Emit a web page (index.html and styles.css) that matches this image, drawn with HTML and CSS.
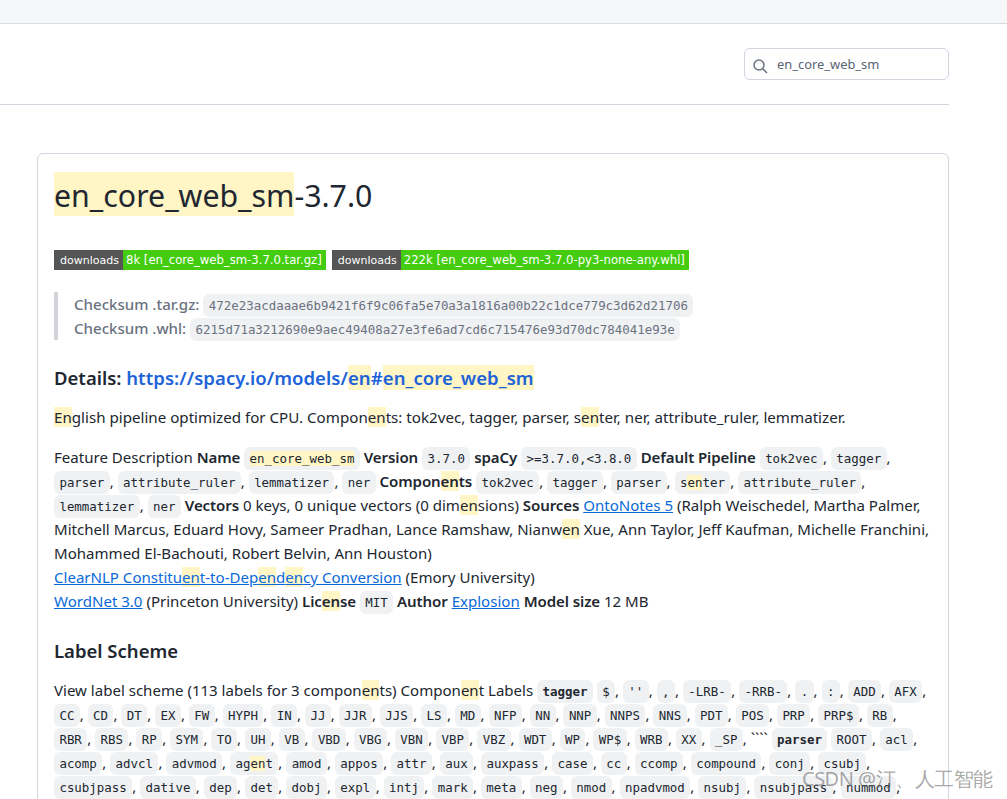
FILE: index.html
```html
<!DOCTYPE html>
<html lang="en">
<head>
<meta charset="utf-8">
<title>en_core_web_sm</title>
<link rel="stylesheet" href="styles.css">
</head>
<body>
<div class="topbar"></div>
<header class="header">
  <div class="search">
    <svg class="search-icon" width="16" height="16" viewBox="0 0 16 16" fill="none" stroke="#6b7280" stroke-width="1.5"><circle cx="7" cy="7" r="5"/><path d="M10.6 10.6 15 15"/></svg>
    <span class="search-text">en_core_web_sm</span>
  </div>
</header>
<main class="card">
  <h1><mark>en_core_web_sm</mark>-3.7.0</h1>
  <div class="badges">
    <span class="badge"><span class="badge-l">downloads</span><span class="badge-r">8k [en_core_web_sm-3.7.0.tar.gz]</span></span>
    <span class="badge"><span class="badge-l">downloads</span><span class="badge-r">222k [en_core_web_sm-3.7.0-py3-none-any.whl]</span></span>
  </div>
  <blockquote>
    Checksum .tar.gz: <code>472e23acdaaae6b9421f6f9c06fa5e70a3a1816a00b22c1dce779c3d62d21706</code><br>
    Checksum .whl: <code>6215d71a3212690e9aec49408a27e3fe6ad7cd6c715476e93d70dc784041e93e</code>
  </blockquote>
  <h3>Details: <a class="plain" href="#">https://spacy.io/models/<mark>en</mark>#<mark>en_core_web_sm</mark></a></h3>
  <p class="intro"><mark>En</mark>glish pipeline optimized for CPU. Compon<mark>en</mark>ts: tok2vec, tagger, parser, s<mark>en</mark>ter, ner, attribute_ruler, lemmatizer.</p>
  <p>Feature Description <strong>Name</strong> <code><mark>en_core_web_sm</mark></code> <strong>Version</strong> <code>3.7.0</code> <strong>spaCy</strong> <code>&gt;=3.7.0,&lt;3.8.0</code> <strong>Default Pipeline</strong> <code>tok2vec</code>, <code>tagger</code>,<br>
  <code>parser</code>, <code>attribute_ruler</code>, <code>lemmatizer</code>, <code>ner</code> <strong>Compon<mark>en</mark>ts</strong> <code>tok2vec</code>, <code>tagger</code>, <code>parser</code>, <code>s<mark>en</mark>ter</code>, <code>attribute_ruler</code>,<br>
  <code>lemmatizer</code>, <code>ner</code> <strong>Vectors</strong> 0 keys, 0 unique vectors (0 dim<mark>en</mark>sions) <strong>Sources</strong> <a href="#">OntoNotes 5</a> (Ralph Weischedel, Martha Palmer,<br>
  Mitchell Marcus, Eduard Hovy, Sameer Pradhan, Lance Ramshaw, Nianw<mark>en</mark> Xue, Ann Taylor, Jeff Kaufman, Michelle Franchini,<br>
  Mohammed El-Bachouti, Robert Belvin, Ann Houston)<br>
  <a href="#">ClearNLP Constitu<mark>en</mark>t-to-Dep<mark>en</mark>d<mark>en</mark>cy Conversion</a> (Emory University)<br>
  <a href="#">WordNet 3.0</a> (Princeton University) <strong>Lic<mark>en</mark>se</strong> <code>MIT</code> <strong>Author</strong> <a href="#">Explosion</a> <strong>Model size</strong> 12 MB</p>
  <h3 class="label-title">Label Scheme</h3>
  <p>View label scheme (113 labels for 3 compon<mark>en</mark>ts) Compon<mark>en</mark>t Labels <code class="bold">tagger</code> <code>$</code>, <code>''</code>, <code>,</code>, <code>-LRB-</code>, <code>-RRB-</code>, <code>.</code>, <code>:</code>, <code>ADD</code>, <code>AFX</code>,<br>
  <code>CC</code>, <code>CD</code>, <code>DT</code>, <code>EX</code>, <code>FW</code>, <code>HYPH</code>, <code>IN</code>, <code>JJ</code>, <code>JJR</code>, <code>JJS</code>, <code>LS</code>, <code>MD</code>, <code>NFP</code>, <code>NN</code>, <code>NNP</code>, <code>NNPS</code>, <code>NNS</code>, <code>PDT</code>, <code>POS</code>, <code>PRP</code>, <code>PRP$</code>, <code>RB</code>,<br>
  <code>RBR</code>, <code>RBS</code>, <code>RP</code>, <code>SYM</code>, <code>TO</code>, <code>UH</code>, <code>VB</code>, <code>VBD</code>, <code>VBG</code>, <code>VBN</code>, <code>VBP</code>, <code>VBZ</code>, <code>WDT</code>, <code>WP</code>, <code>WP$</code>, <code>WRB</code>, <code>XX</code>, <code>_SP</code>, ```` <code class="bold">parser</code> <code>ROOT</code>, <code>acl</code>,<br>
  <code>acomp</code>, <code>advcl</code>, <code>advmod</code>, <code>ag<mark>en</mark>t</code>, <code>amod</code>, <code>appos</code>, <code>attr</code>, <code>aux</code>, <code>auxpass</code>, <code>case</code>, <code>cc</code>, <code>ccomp</code>, <code>compound</code>, <code>conj</code>, <code>csubj</code>,<br>
  <code>csubjpass</code>, <code>dative</code>, <code>dep</code>, <code>det</code>, <code>dobj</code>, <code>expl</code>, <code>intj</code>, <code>mark</code>, <code>meta</code>, <code>neg</code>, <code>nmod</code>, <code>npadvmod</code>, <code>nsubj</code>, <code>nsubjpass</code>, <code>nummod</code>,</p>
</main>
<div class="watermark">CSDN @汀、人工智能</div>
</body>
</html>
```
FILE: styles.css
```css
html, body { margin: 0; padding: 0; height: 799px; overflow: hidden; background: #fff; }
body { font-family: "Noto Sans", sans-serif; font-size: 15.05px; line-height: 24px; color: #212730; position: relative; }
.topbar { height: 23px; background: #f6f7f9; border-bottom: 1px solid #d8dce4; }
.header { width: 949px; box-sizing: border-box; height: 81px; border-bottom: 1px solid #d1d5e0; display: flex; justify-content: flex-end; align-items: flex-start; padding-top: 24px; }
.search { width: 205px; height: 32px; box-sizing: border-box; border: 1px solid #d1d5e0; border-radius: 6px; display: flex; align-items: center; padding-left: 7px; gap: 9px; }
.search-icon { flex: none; margin-top: 3px; }
.search-text { font-size: 12.9px; color: #5b6472; }
.card { width: 912px; box-sizing: border-box; margin: 48px 0 0 37px; border: 1px solid #d1d5e0; border-radius: 6px; padding: 20px 16px 16px; white-space: nowrap; }
mark { background: #fff5c5; color: inherit; }
h1 { margin: 0 0 32px; font-size: 30.3px; font-weight: 400; line-height: 44px; }
h1 mark { padding-top: 3px; }
.badges { display: flex; gap: 6px; margin-bottom: 22px; }
.badge { display: flex; height: 20px; font-family: "DejaVu Sans", sans-serif; font-size: 11px; line-height: 21px; color: #fff; }
.badge-l { background: #555; padding: 0 4px 0 6px; width: 59px; }
.badge-r { background: #44cc11; padding: 0 4px 0 3px; font-size: 11.65px; }
blockquote { margin: 0 0 23px; padding: 0 0 0 16px; border-left: 4px solid #d1d5db; color: #6b7280; font-weight: 500; }
code { font-family: "DejaVu Sans Mono", monospace; font-size: 12.45px; line-height: 1; font-weight: 400; background: #eff1f3; border-radius: 6px; padding: 4px 5.4px; }
code.bold { font-weight: 700; }
h3 { margin: 0 0 12px; font-size: 18.5px; font-weight: 600; line-height: 30px; }
p { margin: 0 0 16px; }
.intro { font-size: 15.15px; }
strong { font-weight: 600; letter-spacing: -0.1px; }
a { color: #0969da; text-decoration: underline; }
a.plain { color: #1d63d8; text-decoration: none; letter-spacing: 0.07px; }
.label-title { margin: 23px 0 12px; }
.watermark { position: absolute; left: 802px; top: 767px; font-size: 20px; letter-spacing: -0.5px; color: rgba(105, 105, 105, 0.58); }
```
